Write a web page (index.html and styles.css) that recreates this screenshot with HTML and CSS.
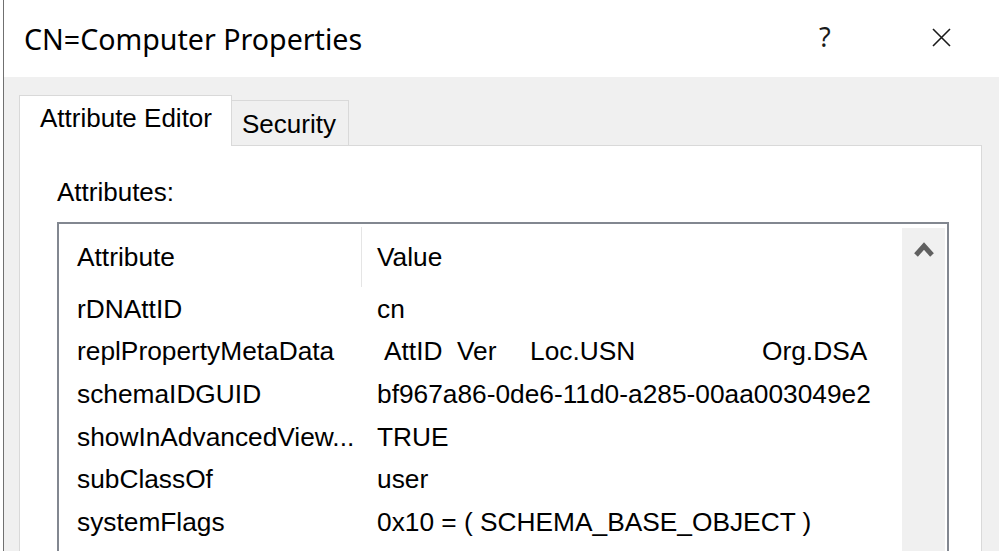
FILE: index.html
```html
<!DOCTYPE html>
<html>
<head>
<meta charset="utf-8">
<link rel="stylesheet" href="styles.css">
</head>
<body>
<div class="window">
  <div class="titlebar">
    <div class="title">CN=Computer Properties</div>
    <div class="help">?</div>
    <div class="close">
      <svg width="19" height="19" viewBox="0 0 19 19"><path d="M1 1 L18 18 M18 1 L1 18" stroke="#1a1a1a" stroke-width="1.6" fill="none"/></svg>
    </div>
  </div>
  <div class="body">
    <div class="tabs">
      <div class="tab active">Attribute Editor</div>
      <div class="tab">Security</div>
    </div>
    <div class="panel">
      <div class="label">Attributes:</div>
      <div class="listbox">
        <div class="listmain">
          <div class="hdr">
            <div class="hcol1">Attribute</div>
            <div class="hcol2">Value</div>
          </div>
          <div class="row"><div class="c1">rDNAttID</div><div class="c2">cn</div></div>
          <div class="row"><div class="c1">replPropertyMetaData</div><div class="c2 meta"><span class="m1">AttID</span><span class="m2">Ver</span><span class="m3">Loc.USN</span><span>Org.DSA</span></div></div>
          <div class="row"><div class="c1">schemaIDGUID</div><div class="c2">bf967a86-0de6-11d0-a285-00aa003049e2</div></div>
          <div class="row"><div class="c1">showInAdvancedView...</div><div class="c2">TRUE</div></div>
          <div class="row"><div class="c1">subClassOf</div><div class="c2">user</div></div>
          <div class="row"><div class="c1">systemFlags</div><div class="c2">0x10 = ( SCHEMA_BASE_OBJECT )</div></div>
        </div>
        <div class="scrollbar">
          <svg class="up" width="20" height="18" viewBox="0 0 20 18"><path d="M2 15 L10 6 L18 15" stroke="#606060" stroke-width="5" fill="none" stroke-linejoin="miter"/></svg>
        </div>
      </div>
    </div>
  </div>
</div>
</body>
</html>
```
FILE: styles.css
```css
html, body {
  margin: 0;
  padding: 0;
  background: #ffffff;
  overflow: hidden;
}
.window {
  margin-left: 3px;
  border-left: 1px solid #707070;
  height: 551px;
  display: flex;
  flex-direction: column;
  font-family: "Liberation Sans", Arial, sans-serif;
  color: #000;
  overflow: hidden;
}
.titlebar {
  height: 77px;
  flex-shrink: 0;
  background: #fff;
  display: flex;
  align-items: center;
}
.title {
  font-family: "Noto Sans", "Open Sans", sans-serif;
  font-size: 28.6px;
  padding-left: 20px;
  flex: 1;
  margin-top: -1px;
  color: #000;
}
.help {
  font-family: "Noto Sans", sans-serif;
  font-size: 27px;
  width: 26px;
  margin-right: 87px;
  margin-top: -4px;
  color: #1a1a1a;
}
.close {
  width: 19px;
  height: 19px;
  margin-right: 48px;
  margin-top: -2px;
}
.body {
  flex: 1;
  min-height: 0;
  background: #f0f0f0;
  padding: 18px 17px 0 15px;
  display: flex;
  flex-direction: column;
}
.tabs {
  display: flex;
  align-items: flex-end;
  height: 51px;
  flex-shrink: 0;
  margin-bottom: -1px;
  position: relative;
  z-index: 1;
}
.tab {
  font-size: 26px;
  box-sizing: border-box;
  border: 1px solid #d9d9d9;
  border-bottom: none;
  background: #f0f0f0;
  height: 45px;
  width: 118px;
  padding-left: 10px;
  padding-top: 8px;
  margin-left: -1px;
  margin-bottom: 1px;
}
.tab.active {
  background: #fff;
  width: 213px;
  height: 51px;
  padding-left: 20px;
  padding-top: 7px;
  margin-left: 0;
  margin-bottom: 0;
  position: relative;
  z-index: 2;
}
.panel {
  flex: 1;
  min-height: 0;
  background: #fff;
  border: 1px solid #d9d9d9;
  border-bottom: none;
  padding: 31px 32px 0 37px;
  display: flex;
  flex-direction: column;
}
.label {
  font-size: 26px;
  height: 45px;
  line-height: 30px;
  flex-shrink: 0;
}
.listbox {
  border: 2px solid #828790;
  border-bottom: none;
  flex: 1;
  min-height: 0;
  display: flex;
}
.listmain {
  flex: 1;
}
.hdr {
  display: flex;
  height: 64px;
  font-size: 26.3px;
}
.hcol1 {
  width: 284px;
  padding-left: 18px;
  height: 60px;
  border-right: 1px solid #e5e5e5;
  display: flex;
  align-items: center;
  margin-top: 3px;
}
.hcol2 {
  padding-left: 15px;
  display: flex;
  align-items: center;
  height: 60px;
  margin-top: 3px;
}
.row {
  display: flex;
  height: 42.6px;
  align-items: center;
  font-size: 26.3px;
  white-space: nowrap;
}
.c1 {
  width: 300px;
  padding-left: 18px;
}
.c2 {
  flex: 1;
}
.meta {
  display: flex;
  padding-left: 7px;
}
.m1, .m2 {
  width: 73px;
}
.m3 {
  width: 232px;
}
.scrollbar {
  width: 43px;
  margin-top: 4px;
  margin-right: 2px;
  background: #f0f0f0;
  display: flex;
  justify-content: center;
  align-items: flex-start;
}
.up {
  margin-top: 12px;
}
```
